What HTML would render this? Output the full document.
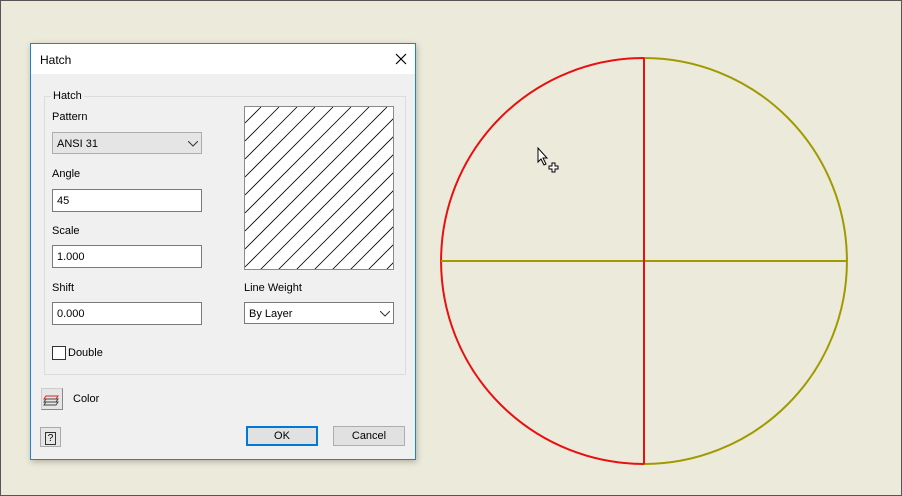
<!DOCTYPE html>
<html><head><style>
body{margin:0;width:902px;height:496px;background:#ecebdb;position:relative;overflow:hidden;font-family:"Liberation Sans",sans-serif;font-size:11px;color:#000}
.frame{position:absolute;left:0;top:0;width:900px;height:494px;border:1px solid #555}
.dlg{position:absolute;left:30px;top:43px;width:384px;height:415px;border:1px solid #1883d7;background:#f0f0f0;box-shadow:1px 2px 6px rgba(0,0,0,.25)}
.title{position:absolute;left:0;top:0;width:384px;height:30px;background:#fff}
.a{position:absolute}
.box{position:absolute;background:#fff;border:1px solid #7a7a7a;box-sizing:border-box;padding:5px 0 0 4px}
.btn{position:absolute;background:#e1e1e1;border:1px solid #adadad;box-sizing:border-box;text-align:center;line-height:18px}
</style></head><body>
<div class="frame"></div>
<svg class="a" style="left:0;top:0" width="902" height="496">
<path d="M644 58 A203 203 0 0 0 644 464" fill="none" stroke="#e81010" stroke-width="2"/>
<path d="M644 58 A203 203 0 0 1 644 464" fill="none" stroke="#a09a00" stroke-width="2"/>
<line x1="441" y1="261" x2="847" y2="261" stroke="#a09a00" stroke-width="2"/>
<line x1="644" y1="58" x2="644" y2="464" stroke="#e81010" stroke-width="2"/>
<path d="M538 148 L538 162 L541 159 L544 165 L546 164 L543 158 L547 158 Z" fill="#fff" stroke="#000" stroke-width="1"/>
<path d="M552 163 h3 v3 h3 v3 h-3 v3 h-3 v-3 h-3 v-3 h3 z" fill="#fff" stroke="#000"/>
</svg>
<div class="dlg">
<div class="title"><span class="a" style="left:9px;top:9px;font-size:12px">Hatch</span>
<svg class="a" style="left:364px;top:9px" width="12" height="12"><path d="M1 1L11 11M11 1L1 11" stroke="#000" stroke-width="1.2"/></svg></div>
<div class="a" style="left:13px;top:52px;width:360px;height:277px;border:1px solid #dcdcdc"></div>
<span class="a" style="left:20px;top:46px;background:#f0f0f0;padding:0 2px">Hatch</span>
<span class="a" style="left:21px;top:67px">Pattern</span>
<div class="box" style="left:21px;top:88px;width:150px;height:22px;background:#e5e5e5;border-color:#adadad">ANSI 31<svg class="a" style="left:135px;top:8px" width="10" height="6"><path d="M0 0L5 5L10 0" fill="none" stroke="#333"/></svg></div>
<span class="a" style="left:21px;top:124px">Angle</span>
<div class="box" style="left:21px;top:145px;width:150px;height:23px">45</div>
<span class="a" style="left:21px;top:181px">Scale</span>
<div class="box" style="left:21px;top:201px;width:150px;height:23px">1.000</div>
<span class="a" style="left:21px;top:238px">Shift</span>
<div class="box" style="left:21px;top:258px;width:150px;height:23px">0.000</div>
<div class="a" style="left:21px;top:302px;width:12px;height:12px;border:1px solid #333;background:#fff"></div>
<span class="a" style="left:37px;top:303px">Double</span>
<svg class="a" style="left:213px;top:62px;border:1px solid #8a8a8a;background:#fff" width="148" height="162">
<g stroke="#000" stroke-width="0.8">
<path d="M0 16L16 0M0 34L34 0M0 52L52 0M0 70L70 0M0 88L88 0M0 106L106 0M0 124L124 0M0 142L142 0M0 160L160 0M0 178L178 0M0 196L196 0M0 214L214 0M0 232L232 0M0 250L250 0M0 268L268 0M0 286L286 0M0 304L304 0"/>
</g></svg>
<span class="a" style="left:213px;top:238px">Line Weight</span>
<div class="box" style="left:213px;top:258px;width:150px;height:22px">By Layer<svg class="a" style="left:135px;top:8px" width="10" height="6"><path d="M0 0L5 5L10 0" fill="none" stroke="#333"/></svg></div>
<div class="a" style="left:10px;top:344px;width:20px;height:20px;border:1px solid #ccc;border-right-color:#888;border-bottom-color:#888;background:#e6e6e6">
<svg width="20" height="20"><path d="M4 7h12l-2 3H2z" fill="none" stroke="#d22"/><path d="M4 10h12l-2 3H2z" fill="none" stroke="#444"/><path d="M4 13h12l-2 3H2z" fill="none" stroke="#444"/></svg></div>
<span class="a" style="left:42px;top:349px">Color</span>
<div class="a" style="left:9px;top:383px;width:19px;height:18px;border:1px solid #aaa;background:#e6e6e6;text-align:center;font-size:12px;line-height:18px"><span style="border:1px solid #333;padding:0 2px;font-size:10px">?</span></div>
<div class="btn" style="left:215px;top:382px;width:72px;height:20px;border:2px solid #0078d7;line-height:16px">OK</div>
<div class="btn" style="left:302px;top:382px;width:72px;height:20px">Cancel</div>
</div>
</body></html>
